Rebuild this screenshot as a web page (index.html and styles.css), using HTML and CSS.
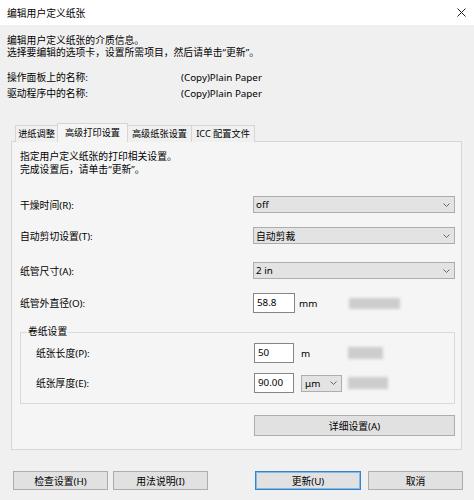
FILE: index.html
```html
<!DOCTYPE html>
<html lang="zh-CN">
<head>
<meta charset="utf-8">
<title>编辑用户定义纸张</title>
<link rel="stylesheet" href="styles.css">
</head>
<body>
<div class="titlebar">
  <span class="title">编辑用户定义纸张</span>
  <svg class="close" width="9" height="9" viewBox="0 0 9 9"><path d="M0.5 0.5L8.5 8.5M8.5 0.5L0.5 8.5" stroke="#222" stroke-width="1" fill="none"/></svg>
</div>
<div class="intro">编辑用户定义纸张的介质信息。<br>选择要编辑的选项卡，设置所需项目，然后请单击“更新”。</div>
<div class="names">
  <span>操作面板上的名称:</span><span>(Copy)Plain Paper</span>
  <span>驱动程序中的名称:</span><span>(Copy)Plain Paper</span>
</div>
<div class="tabs">
  <div class="tab t1">进纸调整</div>
  <div class="tab t2 active">高级打印设置</div>
  <div class="tab t3">高级纸张设置</div>
  <div class="tab t4">ICC 配置文件</div>
</div>
<div class="panel">
  <p class="desc">指定用户定义纸张的打印相关设置。<br>完成设置后，请单击“更新”。</p>
  <div class="row r1">
    <span class="lbl">干燥时间(R):</span>
    <div class="select wide"><span>off</span><svg class="chev" width="7" height="4" viewBox="0 0 7 4"><path d="M0.5 0.5L3.5 3.5L6.5 0.5" stroke="#666" fill="none"/></svg></div>
  </div>
  <div class="row r2">
    <span class="lbl">自动剪切设置(T):</span>
    <div class="select wide"><span>自动剪裁</span><svg class="chev" width="7" height="4" viewBox="0 0 7 4"><path d="M0.5 0.5L3.5 3.5L6.5 0.5" stroke="#666" fill="none"/></svg></div>
  </div>
  <div class="row r3">
    <span class="lbl">纸管尺寸(A):</span>
    <div class="select wide"><span>2 in</span><svg class="chev" width="7" height="4" viewBox="0 0 7 4"><path d="M0.5 0.5L3.5 3.5L6.5 0.5" stroke="#666" fill="none"/></svg></div>
  </div>
  <div class="row r4">
    <span class="lbl">纸管外直径(O):</span>
    <div class="input w42">58.8</div>
    <span class="unit u1">mm</span>
    <div class="blur b1"></div>
  </div>
  <fieldset class="group">
    <legend>卷纸设置</legend>
    <div class="row g1">
      <span class="glbl">纸张长度(P):</span>
      <div class="input w40">50</div>
      <span class="unit u2">m</span>
      <div class="blur b2"></div>
    </div>
    <div class="row g2">
      <span class="glbl">纸张厚度(E):</span>
      <div class="input w40">90.00</div>
      <div class="select small"><span>μm</span><svg class="chev" width="7" height="4" viewBox="0 0 7 4"><path d="M0.5 0.5L3.5 3.5L6.5 0.5" stroke="#666" fill="none"/></svg></div>
      <div class="blur b3"></div>
    </div>
  </fieldset>
  <button class="btn detail">详细设置(A)</button>
</div>
<div class="footer">
  <button class="btn f1">检查设置(H)</button>
  <button class="btn f2">用法说明(I)</button>
  <button class="btn f3">更新(U)</button>
  <button class="btn f4">取消</button>
</div>
</body>
</html>
```
FILE: styles.css
```css
* { box-sizing: border-box; }
html, body { margin: 0; padding: 0; }
body {
  width: 474px;
  height: 500px;
  overflow: hidden;
  background: #f0f0f0;
  font-family: "Noto Sans", "Noto Sans CJK SC", sans-serif;
  font-size: 9.8px;
  color: #000;
}
.titlebar {
  height: 25px;
  background: #fff;
  display: flex;
  align-items: center;
  justify-content: space-between;
  padding: 0 8px 0 7px;
}
.close { display: block; }
.intro { margin: 10px 0 0 7px; line-height: 12px; }
.names {
  display: grid;
  grid-template-columns: 174px auto;
  margin: 11px 0 0 7px;
  line-height: 16px;
}
.tabs {
  display: flex;
  align-items: flex-end;
  height: 19px;
  margin: 21px 0 0 15px;
}
.tab {
  height: 17px;
  border: 1px solid #d6d6d6;
  border-bottom: none;
  background: #f0f0f0;
  text-align: center;
  line-height: 15px;
  white-space: nowrap;
  font-size: 9.2px;
}
.tab + .tab { margin-left: -1px; }
.t1 { width: 43px; }
.t2 { width: 71px; }
.t3 { width: 65px; }
.t4 { width: 64px; }
.tab.active {
  height: 19px;
  line-height: 18px;
  background: #f5f5f5;
  position: relative;
  z-index: 1;
}
.panel {
  margin: -1px 0 0 11px;
  width: 451px;
  border: 1px solid #d6d6d6;
  background: #f5f5f5;
  padding: 8px 6px 13px 8px;
}
.desc { margin: 0; line-height: 13px; }
.row { display: flex; align-items: center; }
.lbl { width: 233px; }
.r1 { margin-top: 20px; }
.r2 { margin-top: 14px; }
.r3 { margin-top: 18px; }
.r4 { margin-top: 14px; }
.select {
  height: 17px;
  background: #e3e3e3;
  border: 1px solid #adadad;
  display: flex;
  align-items: center;
  justify-content: space-between;
  padding: 0 4px 0 2px;
}
.wide { width: 202px; }
.small { width: 41px; margin-left: 7px; padding-left: 3px; }
.chev { display: block; }
.input {
  height: 20px;
  background: #fff;
  border: 1px solid #858585;
  padding: 0 3px;
  line-height: 17px;
}
.w42 { width: 42px; }
.w40 { width: 40px; }
.unit { display: block; }
.u1 { margin-left: 4px; width: 50px; }
.u2 { margin-left: 7px; width: 47px; }
.blur {
  height: 11px;
  background: #cdcdcd;
  filter: blur(1.6px);
}
.b1 { width: 51px; }
.b2 { width: 35px; height: 12px; }
.b3 { width: 40px; height: 12px; margin-left: 6px; }
.group {
  margin: 13px 0 0 0;
  padding: 0 0 10px 6px;
  border: 1px solid #d9d9d9;
  min-width: 0;
}
.group legend { padding: 0 1px; line-height: 12px; }
.glbl { margin-left: 9px; width: 218px; }
.g1 { margin-top: 5px; }
.g2 { margin-top: 10px; }
.btn {
  display: block;
  height: 19px;
  background: #e1e1e1;
  border: 1px solid #adadad;
  font: inherit;
  color: #000;
  padding: 0;
  text-align: center;
}
.detail { margin: 11px 0 0 234px; width: 201px; height: 21px; }
.footer { display: flex; margin: 21px 0 0 13px; }
.f1 { width: 95px; }
.f2 { width: 95px; margin-left: 5px; }
.f3 {
  width: 106px;
  margin-left: 47px;
  border-color: #2b86d8;
  box-shadow: inset 0 0 0 1px rgba(43, 134, 216, 0.45);
}
.f4 { width: 95px; margin-left: 7px; }
```
